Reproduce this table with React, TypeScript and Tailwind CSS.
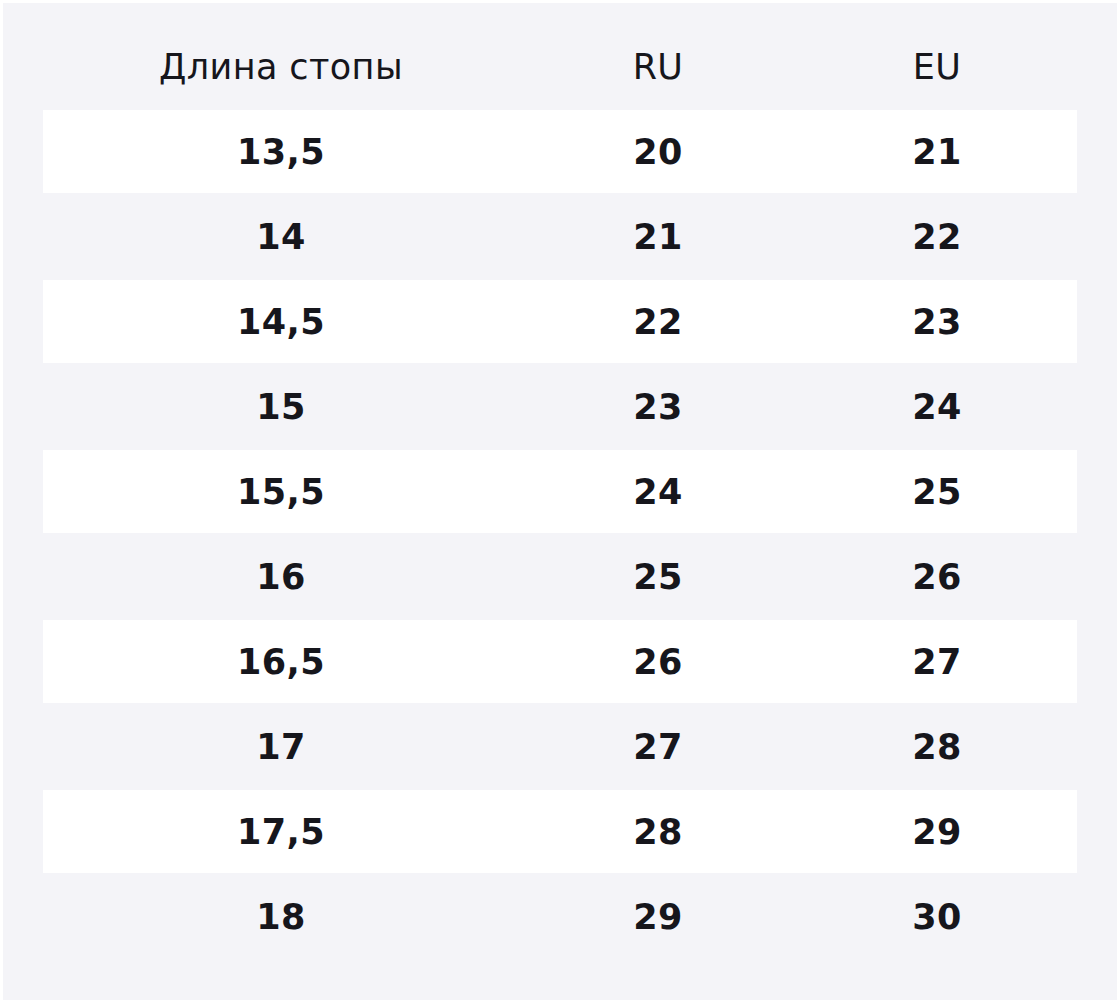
const rows: [string, string, string][] = [
  ["13,5", "20", "21"],
  ["14", "21", "22"],
  ["14,5", "22", "23"],
  ["15", "23", "24"],
  ["15,5", "24", "25"],
  ["16", "25", "26"],
  ["16,5", "26", "27"],
  ["17", "27", "28"],
  ["17,5", "28", "29"],
  ["18", "29", "30"],
];

export default function App() {
  return (
    <div className="bg-white p-[3px] w-[1120px] h-[1003px]" style={{ fontFamily: '"DejaVu Sans", sans-serif' }}>
      <div className="bg-[#f4f4f8] w-[1114px] h-[997px] px-[40px] pt-[20px] pb-[40px] text-[#16161c] tracking-[0.025em]">
        <div className="grid grid-cols-[476px_278px_280px] h-[87px] pt-[2px] items-center text-center text-[35px]">
          <div>Длина стопы</div>
          <div>RU</div>
          <div>EU</div>
        </div>
        {rows.map((r, i) => (
          <div
            key={r[0]}
            className={
              i % 2 === 0
                ? "grid grid-cols-[476px_278px_280px] h-[83px] pt-[2px] items-center text-center text-[35px] font-bold bg-white"
                : "grid grid-cols-[476px_278px_280px] h-[87px] pt-[2px] items-center text-center text-[35px] font-bold"
            }
          >
            <div>{r[0]}</div>
            <div>{r[1]}</div>
            <div>{r[2]}</div>
          </div>
        ))}
      </div>
    </div>
  );
}
